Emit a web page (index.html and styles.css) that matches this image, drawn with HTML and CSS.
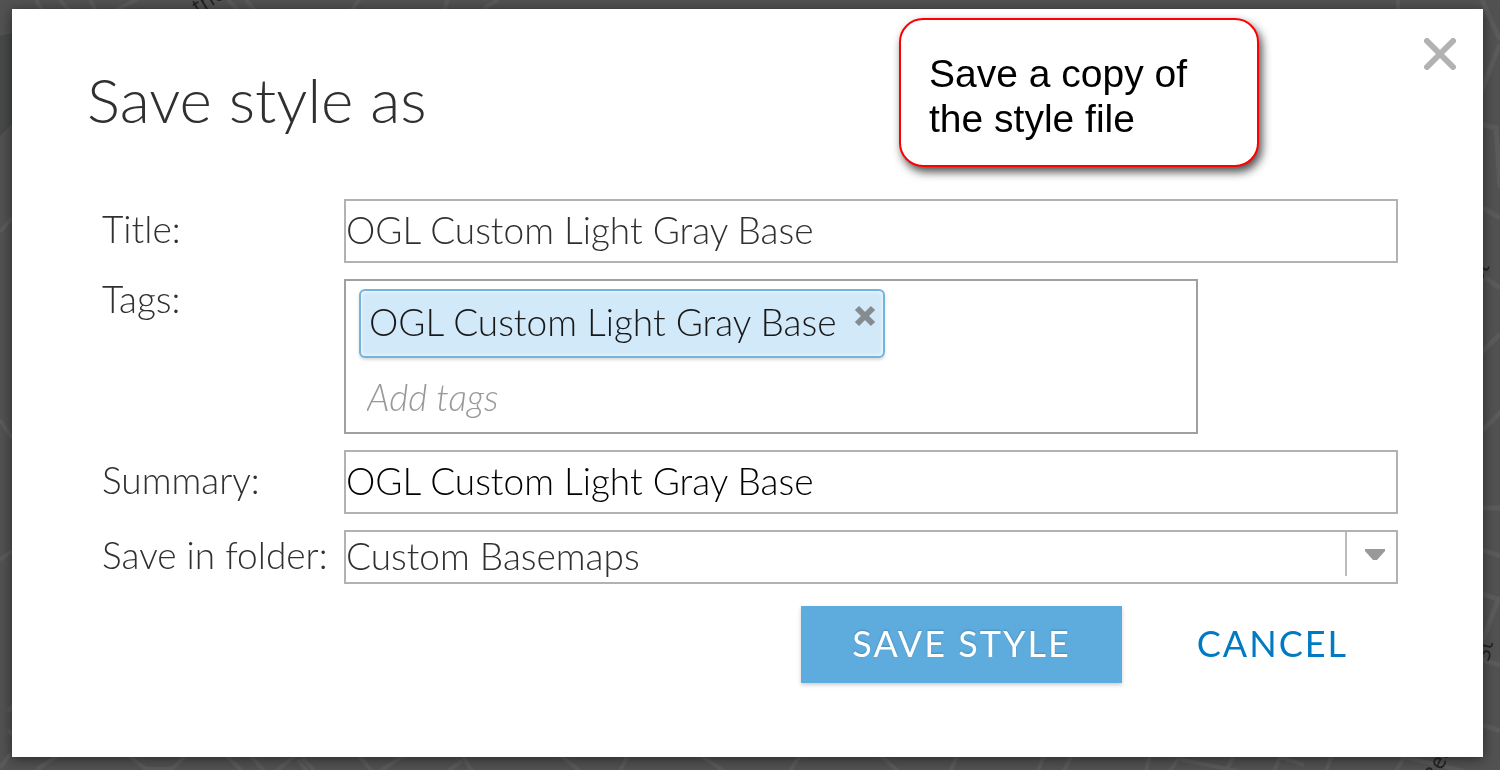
FILE: index.html
```html
<!DOCTYPE html>
<html lang="en">
<head>
  <meta charset="utf-8">
  <title>Save style as</title>
  <link rel="stylesheet" href="styles.css">
</head>
<body>
  <!-- dimmed map behind the dialog -->
  <svg class="map" viewBox="0 0 1500 770" preserveAspectRatio="none" aria-hidden="true">
    <path class="park" d="M0 36L12 33V124L0 136Z"/>
    <g class="roads">
      <path d="M36 0l8 14M60 0l12 14M90 0l8 14M116 10l28-14M228 0l14 14M246 0l12 14M350 12l12-16M444 12l4-14M484 8l14-8M1398 0v12"/>
      <path d="M0 232l12-14M0 420l12 18M0 560l12-9M8 712l6-8M8 730l6 6"/>
      <path class="wide" d="M1482 0l18 40M1500 44l-20 50M1480 124l16 4 4 60M1483 208l17 10M1483 276l17 12M1480 354l20-20M1483 430l20-20M1480 508h20M1483 550l17 6M1483 594l17 6M1498 600l-15 40M1483 660l17 5M1483 725l17 6"/>
      <path d="M0 768l10-14M36 770l24-16M128 755l18 14h26l14-14M226 755l16 16M250 755l14 16M276 771l20-16M298 760l10 12M302 758l12 12M358 755l14 16M380 771l28-18M448 771l14-10M462 755l10 16"/>
      <path d="M560 755l20 16M620 771l8-16M700 755l24 16M790 771l10-16M880 755l18 16M950 771l8-16M1038 771l6-16M1064 771l8-16M1146 771l4-16M1170 771l8-12 60 12M1226 771l8-16M1274 771l6-14 24 8M1326 771l6-16M1396 771l8-14 60 14"/>
    </g>
    <g class="places">
      <text transform="translate(198 15) rotate(-32)">the</text>
      <text transform="translate(1480 284) rotate(-60)">St</text>
      <text transform="translate(1489 662) rotate(-78)">St</text>
      <text transform="translate(1436 784) rotate(-65)">Beach</text>
    </g>
  </svg>

  <main class="page">
    <section class="dialog" role="dialog" aria-labelledby="dialogTitle">
      <button class="close" type="button" aria-label="Close">
        <svg width="32" height="32" viewBox="0 0 32 32"><path d="M3 3l26 26M29 3L3 29"/></svg>
      </button>

      <h1 id="dialogTitle">Save style as</h1>

      <form class="style-form">
        <label for="title">Title:</label>
        <input class="field" type="text" id="title" name="title" value="OGL Custom Light Gray Base">

        <label class="tags-label" for="tags">Tags:</label>
        <div class="tag-box">
          <span class="tag">
            OGL Custom Light Gray Base
            <button class="tag-remove" type="button" aria-label="Remove tag">
              <svg width="22" height="22" viewBox="0 0 22 22"><path d="M3 3l16 16M19 3L3 19"/></svg>
            </button>
          </span>
          <input class="tag-input" type="text" id="tags" name="tags" placeholder="Add tags">
        </div>

        <label for="summary">Summary:</label>
        <input class="field summary" type="text" id="summary" name="summary" value="OGL Custom Light Gray Base">

        <label for="folder">Save in folder:</label>
        <div class="select-box">
          <select id="folder" name="folder">
            <option>Custom Basemaps</option>
          </select>
          <svg class="arrow" width="20" height="11" viewBox="0 0 20 11"><path d="M0 0h20v2l-8 9H8L0 2Z"/></svg>
        </div>

        <div class="actions">
          <button class="save" type="submit">SAVE STYLE</button>
          <button class="cancel" type="button">CANCEL</button>
        </div>
      </form>
    </section>
  </main>

  <aside class="callout">Save a copy of<br>the style file</aside>
</body>
</html>
```

FILE: styles.css
```css
* {
  box-sizing: border-box;
}

body {
  margin: 0;
  background: #525252;
  color: #303030;
  font-family: Lato, "Liberation Sans", sans-serif;
  font-size: 37px;
  font-weight: 300;
}

button,
input,
select {
  margin: 0;
  padding: 0;
  border: 0;
  background: none;
  color: inherit;
  font: inherit;
}

.map {
  position: fixed;
  top: 0;
  left: 0;
  width: 100%;
  height: 100%;
}

.park {
  fill: #474a48;
}

.roads {
  fill: none;
  stroke: #5b5b5b;
  stroke-width: 4;
}

.roads .wide {
  stroke-width: 5;
}

.places {
  fill: #242424;
  font-family: "Noto Sans", sans-serif;
  font-size: 22px;
  font-weight: 400;
}

.page {
  position: relative;
  padding: 9px 17px 13px 12px;
}

.dialog {
  position: relative;
  padding: 54px 85px 74px 75px;
  background: #fff;
  box-shadow: 0 2px 12px rgba(0, 0, 0, 0.5);
}

.close {
  position: absolute;
  top: 29px;
  right: 27px;
  height: 32px;
  line-height: 0;
}

.close path {
  stroke: #b2b2b2;
  stroke-width: 6;
  stroke-linecap: round;
}

h1 {
  margin: 0 0 64px;
  font-size: 62px;
  font-weight: 300;
  line-height: 72px;
}

.style-form {
  display: grid;
  grid-template-columns: 242px 1fr;
  row-gap: 16px;
  align-items: center;
  padding-left: 15px;
}

label {
  padding-bottom: 4px;
  line-height: 44px;
}

.tags-label {
  align-self: start;
  line-height: 40px;
}

.field {
  width: 100%;
  height: 64px;
  padding-bottom: 4px;
  border: 2px solid #b2b2b2;
}

.summary {
  color: #000;
}

.tag-box {
  display: flex;
  flex-direction: column;
  align-items: flex-start;
  gap: 14px;
  width: 81%;
  height: 155px;
  padding: 8px 13px;
  border: 2px solid #a0a0a0;
}

.tag {
  display: flex;
  align-items: flex-start;
  gap: 18px;
  height: 69px;
  padding: 0 7px 0 8px;
  border: 2px solid #72b4de;
  border-radius: 6px;
  background: #d2e9f9;
  box-shadow: inset 0 0 4px #fff, 0 2px 3px rgba(0, 0, 0, 0.15);
  color: #181818;
  line-height: 62px;
}

.tag-remove {
  padding-top: 14px;
  line-height: 0;
}

.tag-remove path {
  stroke: #848c92;
  stroke-width: 6;
}

.tag-input {
  width: 100%;
  height: 50px;
  padding: 0 0 2px 8px;
}

.tag-input::placeholder {
  color: #999;
  font-style: italic;
  opacity: 1;
}

.select-box {
  position: relative;
  height: 54px;
  border: 2px solid #b2b2b2;
}

.select-box::after {
  content: "";
  position: absolute;
  top: 0;
  right: 49px;
  width: 2px;
  height: 44px;
  background: #bbb;
}

select {
  width: 100%;
  height: 50px;
  padding-bottom: 4px;
  appearance: none;
}

.arrow {
  position: absolute;
  top: 17px;
  right: 11px;
  fill: #999;
  pointer-events: none;
}

.actions {
  grid-column: 1 / -1;
  display: flex;
  justify-content: flex-end;
  gap: 25px;
  margin-top: 6px;
}

.save,
.cancel {
  height: 77px;
  padding: 0 50px 4px;
  font-size: 36px;
  font-weight: 400;
  letter-spacing: 2px;
}

.save {
  padding: 0 51px 4px;
  background: #5eacde;
  box-shadow: 0 2px 4px rgba(0, 0, 0, 0.2);
  color: #fff;
  text-shadow: 0 -1px 2px rgba(0, 0, 0, 0.2);
}

.cancel {
  color: #007ac2;
}

.callout {
  position: absolute;
  top: 18px;
  left: 899px;
  width: 360px;
  height: 149px;
  padding: 31px 28px;
  border: 2px solid #f00;
  border-radius: 24px;
  background: #fff;
  box-shadow: 3px 5px 10px rgba(0, 0, 0, 0.7);
  color: #000;
  font: 39px/45px "Liberation Sans", Arial, sans-serif;
}
```
